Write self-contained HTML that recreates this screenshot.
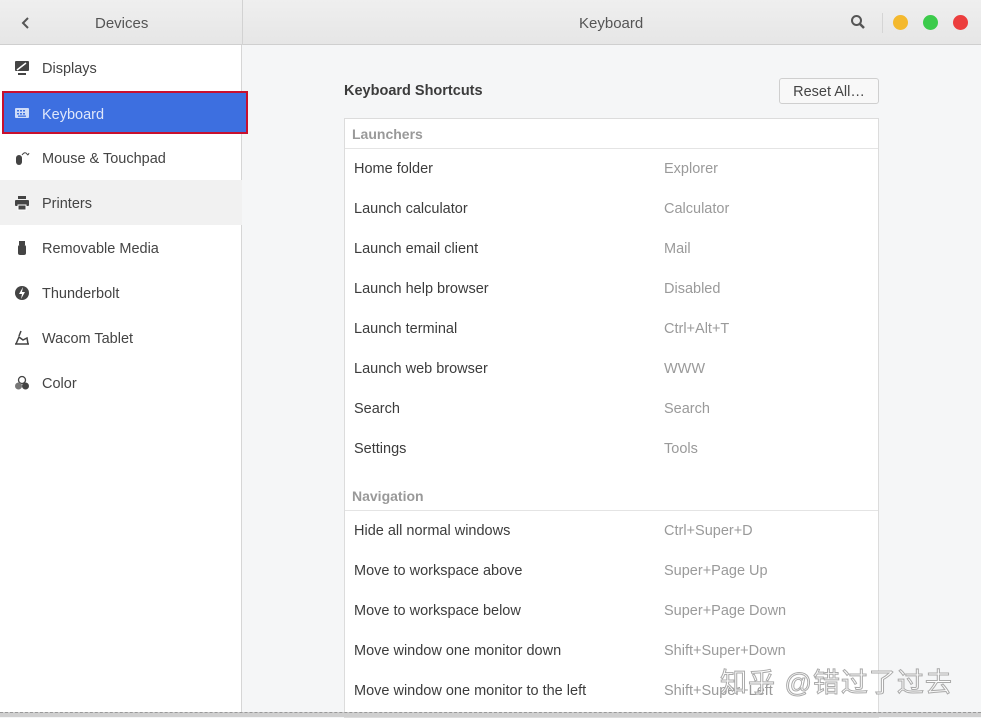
<!DOCTYPE html>
<html><head><meta charset="utf-8"><style>
*{margin:0;padding:0;box-sizing:border-box}
body{width:981px;height:717px;overflow:hidden;background:#f5f6f7;font-family:"Liberation Sans","Noto Sans CJK SC",sans-serif;font-size:14px;color:#3c3c3c;position:relative}
.abs{position:absolute}
.hdr{left:0;top:0;width:981px;height:45px;background:linear-gradient(#efefef,#e6e6e6);border-bottom:1px solid #cfcfcf}
.side{left:0;top:45px;width:242px;height:668px;background:#fff;border-right:1px solid #d6d6d6}
.si{position:absolute;left:0;width:242px;height:45px;line-height:49px;padding-left:42px;font-size:14.5px;color:#444}
.ic{position:absolute;left:14px;top:15px;width:16px;height:16px}
.list{left:344px;top:118px;width:535px;height:600px;background:#fff;border:1px solid #dcdcdc}
.row{position:absolute;left:9px;font-size:14.5px;color:#3c3c3c;margin-top:2px}
.acc{position:absolute;left:319px;font-size:14.5px;color:#9a9a9a;margin-top:2px}
.sec{position:absolute;left:7px;font-weight:bold;color:#999;font-size:14px;margin-top:1px}
.sep{position:absolute;left:0;width:533px;height:1px;background:#e4e4e4}
</style></head><body>
<div class="abs hdr"></div>
<div class="abs" style="left:242px;top:0;width:1px;height:45px;background:#d2d2d2"></div>
<svg class="abs" style="left:20px;top:15px" width="12" height="16"><path d="M8 3 L3 8 L8 13" stroke="#555" stroke-width="2" fill="none"/></svg>
<div class="abs" style="left:95px;top:15px;font-size:15px;color:#555">Devices</div>
<div class="abs" style="left:579px;top:15px;font-size:15px;color:#555">Keyboard</div>
<svg class="abs" style="left:850px;top:14px" width="16" height="16"><circle cx="6.5" cy="6.5" r="4.5" stroke="#555" stroke-width="2" fill="none"/><path d="M10 10 L14 14" stroke="#555" stroke-width="2.5"/></svg>
<div class="abs" style="left:882px;top:13px;width:1px;height:20px;background:#d5d5d5"></div>
<div class="abs" style="left:893px;top:15px;width:15px;height:15px;border-radius:50%;background:#f4b92e"></div>
<div class="abs" style="left:923px;top:15px;width:15px;height:15px;border-radius:50%;background:#3ccb4b"></div>
<div class="abs" style="left:953px;top:15px;width:15px;height:15px;border-radius:50%;background:#ec3e3e"></div>

<div class="abs side">
<div class="si" style="top:0"><svg class="ic" viewBox="0 0 16 16"><rect x="1" y="1" width="14" height="10" rx="1" fill="#444"/><path d="M3 10 L12 3" stroke="#fff" stroke-width="1.5"/><rect x="4" y="13" width="8" height="2" fill="#444"/></svg>Displays</div>
<div class="si" style="left:2px;top:46px;width:246px;height:43px;line-height:45px;background:#3d6fe0;border:2px solid #c8102e;color:#dfe7fa;padding-left:38px"><svg class="ic" style="left:10px;top:12px" viewBox="0 0 16 16"><rect x="1" y="3" width="14" height="10" rx="1" fill="#cfdcf8"/><g fill="#3d6fe0"><rect x="3" y="5" width="2" height="1.5"/><rect x="6" y="5" width="2" height="1.5"/><rect x="9" y="5" width="2" height="1.5"/><rect x="3" y="8" width="2" height="1.5"/><rect x="6" y="8" width="2" height="1.5"/><rect x="9" y="8" width="2" height="1.5"/><rect x="4" y="10.5" width="8" height="1.3"/></g></svg>Keyboard</div>
<div class="si" style="top:90px"><svg class="ic" viewBox="0 0 16 16"><rect x="2" y="5" width="6" height="10" rx="3" fill="#444"/><path d="M8 5 Q11 1 13 4 Q14 6 15 3" stroke="#444" fill="none"/></svg>Mouse &amp; Touchpad</div>
<div class="si" style="top:135px;background:#f1f1f1"><svg class="ic" viewBox="0 0 16 16"><rect x="4" y="1" width="8" height="3" fill="#444"/><rect x="1" y="5" width="14" height="6" rx="1" fill="#444"/><rect x="4" y="10" width="8" height="5" fill="#444" stroke="#fff"/></svg>Printers</div>
<div class="si" style="top:180px"><svg class="ic" viewBox="0 0 16 16"><rect x="5" y="1" width="6" height="4" fill="#444"/><rect x="4" y="5" width="8" height="10" rx="2" fill="#444"/></svg>Removable Media</div>
<div class="si" style="top:225px"><svg class="ic" viewBox="0 0 16 16"><circle cx="8" cy="8" r="7" fill="#444"/><path d="M9 2 L5 9 H8 L7 14 L11 7 H8 Z" fill="#fff"/></svg>Thunderbolt</div>
<div class="si" style="top:270px"><svg class="ic" viewBox="0 0 16 16"><path d="M1 14 H15 M2 14 L5 7 L9 10 L13 8 L14 14" stroke="#444" stroke-width="1.5" fill="none"/><path d="M5 6 L7 1" stroke="#444" stroke-width="1.5"/></svg>Wacom Tablet</div>
<div class="si" style="top:315px"><svg class="ic" viewBox="0 0 16 16"><circle cx="8" cy="5" r="3.5" fill="none" stroke="#444" stroke-width="1.3"/><circle cx="4.5" cy="11" r="3.5" fill="#777"/><circle cx="11.5" cy="11" r="3.5" fill="#444"/></svg>Color</div>
</div>

<div class="abs" style="left:344px;top:83px;font-weight:bold;font-size:14.5px;color:#3c3c3c">Keyboard Shortcuts</div>
<div class="abs" style="left:779px;top:78px;width:100px;height:26px;border:1px solid #cfcfcf;border-radius:3px;background:#f8f8f8;text-align:center;line-height:26px;font-size:14.5px;color:#444">Reset All…</div>

<div class="abs list">
<div class="sec" style="top:6px">Launchers</div>
<div class="sep" style="top:29px"></div>
<div class="row" style="top:40px">Home folder</div><div class="acc" style="top:40px">Explorer</div>
<div class="row" style="top:80px">Launch calculator</div><div class="acc" style="top:80px">Calculator</div>
<div class="row" style="top:120px">Launch email client</div><div class="acc" style="top:120px">Mail</div>
<div class="row" style="top:160px">Launch help browser</div><div class="acc" style="top:160px">Disabled</div>
<div class="row" style="top:200px">Launch terminal</div><div class="acc" style="top:200px">Ctrl+Alt+T</div>
<div class="row" style="top:240px">Launch web browser</div><div class="acc" style="top:240px">WWW</div>
<div class="row" style="top:280px">Search</div><div class="acc" style="top:280px">Search</div>
<div class="row" style="top:320px">Settings</div><div class="acc" style="top:320px">Tools</div>
<div class="sec" style="top:368px">Navigation</div>
<div class="sep" style="top:391px"></div>
<div class="row" style="top:402px">Hide all normal windows</div><div class="acc" style="top:402px">Ctrl+Super+D</div>
<div class="row" style="top:442px">Move to workspace above</div><div class="acc" style="top:442px">Super+Page Up</div>
<div class="row" style="top:482px">Move to workspace below</div><div class="acc" style="top:482px">Super+Page Down</div>
<div class="row" style="top:522px">Move window one monitor down</div><div class="acc" style="top:522px">Shift+Super+Down</div>
<div class="row" style="top:562px">Move window one monitor to the left</div><div class="acc" style="top:562px">Shift+Super+Left</div>
</div>
<div class="abs" style="left:720px;top:661px;font-size:27px;color:rgba(255,255,255,0.85);-webkit-text-stroke:1px #aaa;letter-spacing:1px">知乎 @错过了过去</div>
<div class="abs" style="left:0;top:712px;width:981px;height:5px;background:#cfcfcf;border-top:1px dashed #999"></div>
</body></html>
